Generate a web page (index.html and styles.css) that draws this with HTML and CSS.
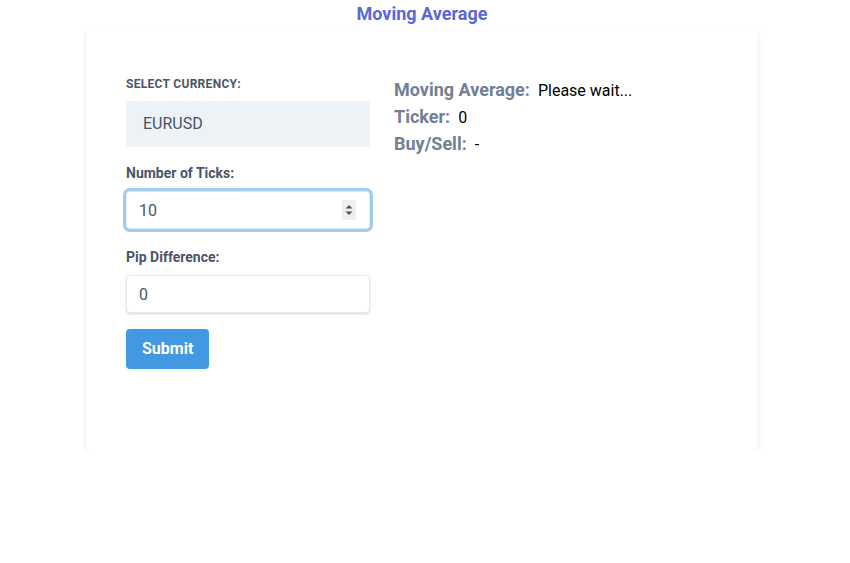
FILE: index.html
```html
<!DOCTYPE html>
<html lang="en">
<head>
<meta charset="utf-8">
<title>Moving Average</title>
<link rel="stylesheet" href="styles.css">
</head>
<body>
<div class="page">
  <h1 class="title">Moving Average</h1>
  <div class="card">
    <form class="form">
      <div class="group group-first">
        <label class="label-caps">Select Currency:</label>
        <select class="select"><option>EURUSD</option></select>
      </div>
      <div class="group">
        <label class="label">Number of Ticks:</label>
        <div class="input-wrap">
          <input class="input focused" type="text" value="10">
          <span class="spinner">
            <svg width="14" height="20" viewBox="0 0 14 20"><rect width="14" height="20" fill="#efefef"/><path d="M3.5 8.5 L7 5 L10.5 8.5 Z" fill="#555"/><path d="M3.5 11.5 L7 15 L10.5 11.5 Z" fill="#555"/></svg>
          </span>
        </div>
      </div>
      <div class="group group-last">
        <label class="label">Pip Difference:</label>
        <input class="input" type="text" value="0">
      </div>
      <button class="btn" type="button">Submit</button>
    </form>
    <div class="results">
      <div class="row"><span class="key">Moving Average:</span><span class="val">Please wait...</span></div>
      <div class="row"><span class="key">Ticker:</span><span class="val">0</span></div>
      <div class="row"><span class="key">Buy/Sell:</span><span class="val">-</span></div>
    </div>
  </div>
</div>
</body>
</html>
```
FILE: styles.css
```css
* { box-sizing: border-box; }
html, body { margin: 0; padding: 0; background: #fff; }
body { font-family: Roboto, "Noto Sans", "Liberation Sans", sans-serif; color: #000; }
.page { width: 844px; }
.title {
  margin: 0;
  text-align: center;
  font-size: 18px;
  line-height: 28px;
  font-weight: 700;
  color: #5a67d8;
}
.card {
  width: 672px;
  margin: 0 auto;
  background: #fff;
  border-radius: 4px;
  box-shadow: 0 4px 6px -1px rgba(0,0,0,0.1), 0 2px 4px -1px rgba(0,0,0,0.06);
  padding: 48px 40px 80px 40px;
  display: flex;
  gap: 24px;
}
.form { width: 244px; flex: none; }
.group { margin-bottom: 18px; }
.group-first { margin-bottom: 16px; }
.group-last { margin-bottom: 16px; }
.label-caps {
  display: block;
  text-transform: uppercase;
  letter-spacing: 0.025em;
  font-size: 12px;
  line-height: 16px;
  font-weight: 700;
  color: #4a5568;
  margin-bottom: 9px;
}
.label {
  display: block;
  font-size: 14px;
  line-height: 20px;
  font-weight: 700;
  color: #4a5568;
  margin-bottom: 8px;
}
.select {
  display: block;
  width: 100%;
  -webkit-appearance: none;
  appearance: none;
  background: #edf2f7;
  border: 1px solid #edf2f7;
  border-radius: 4px;
  padding: 12px 16px;
  font-family: inherit;
  font-size: 16px;
  line-height: 20px;
  height: 46px;
  color: #4a5568;
}
.input-wrap { position: relative; }
.input {
  display: block;
  width: 100%;
  height: 38px;
  border: 1px solid #e2e8f0;
  border-radius: 4px;
  box-shadow: 0 1px 3px 0 rgba(0,0,0,0.1), 0 1px 2px 0 rgba(0,0,0,0.06);
  padding: 8px 12px;
  font-family: inherit;
  font-size: 16px;
  line-height: 20px;
  color: #4a5568;
  background: #fff;
  outline: none;
}
.input.focused {
  box-shadow: 0 0 0 3px rgba(66,153,225,0.5);
}
.spinner {
  position: absolute;
  right: 14px;
  top: 9px;
  width: 14px;
  height: 20px;
  display: block;
}
.spinner svg { display: block; }
.btn {
  display: block;
  background: #4299e1;
  color: #fff;
  border: none;
  border-radius: 4px;
  padding: 8px 16px;
  font-family: inherit;
  font-size: 16px;
  line-height: 24px;
  font-weight: 700;
}
.results { flex: 1; }
.row {
  font-size: 18px;
  line-height: 27px;
  height: 27px;
}
.key { font-weight: 700; color: #718096; }
.val { font-size: 16px; line-height: 1; color: #000; margin-left: 8px; }
```
